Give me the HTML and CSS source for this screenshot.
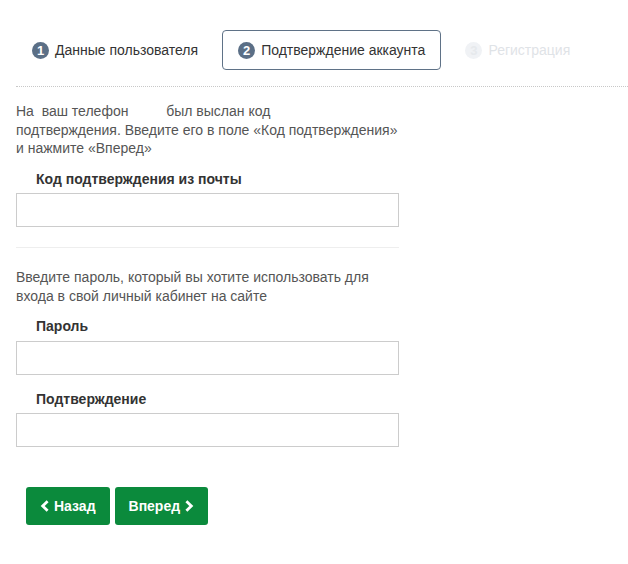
FILE: index.html
```html
<!DOCTYPE html>
<html lang="ru">
<head>
<meta charset="utf-8">
<link rel="stylesheet" href="styles.css">
</head>
<body>
<div class="page">
  <nav class="steps">
    <div class="step done"><span class="num">1</span><span>Данные пользователя</span></div>
    <div class="step active"><span class="num">2</span><span>Подтверждение аккаунта</span></div>
    <div class="step disabled"><span class="num">3</span><span>Регистрация</span></div>
  </nav>
  <div class="content">
    <p class="info">На&nbsp; ваш телефон <span class="phone"></span> был выслан код<br>подтверждения. Введите его в поле «Код подтверждения» и нажмите «Вперед»</p>
    <div class="group">
      <label class="label">Код подтверждения из почты</label>
      <input class="field" type="text">
    </div>
    <hr class="sep">
    <p class="info">Введите пароль, который вы хотите использовать для входа в свой личный кабинет на сайте</p>
    <div class="group">
      <label class="label">Пароль</label>
      <input class="field" type="password">
    </div>
    <div class="group">
      <label class="label">Подтверждение</label>
      <input class="field" type="password">
    </div>
  </div>
  <div class="actions">
    <button class="btn"><svg class="chev" viewBox="0 0 10 12"><path d="M7.6 1.3 L2.7 6 L7.6 10.7" /></svg>Назад</button>
    <button class="btn">Вперед<svg class="chev" viewBox="0 0 10 12"><path d="M2.4 1.3 L7.3 6 L2.4 10.7" /></svg></button>
  </div>
</div>
</body>
</html>
```
FILE: styles.css
```css
* { box-sizing: border-box; }
html, body { margin: 0; padding: 0; background: #fff; }
body {
  font-family: "Liberation Sans", Arial, sans-serif;
  font-size: 14px;
  line-height: 18.5px;
  color: #555;
}
.page { padding: 30px 0 0 16px; }
.steps {
  display: flex;
  gap: 8px;
  padding-bottom: 16px;
  border-bottom: 1px dotted #c8c8c8;
}
.step {
  display: flex;
  align-items: center;
  gap: 6px;
  height: 40px;
  padding: 0 15px;
  border: 1px solid transparent;
  border-radius: 4px;
  color: #333;
}
.step.active { border-color: #5f7287; }
.step.disabled { color: #dfe3e7; }
.num {
  width: 17px;
  height: 17px;
  border-radius: 50%;
  background: #5b6f86;
  color: #fff;
  font-weight: bold;
  font-size: 13px;
  line-height: 17px;
  text-align: center;
}
.step.disabled .num { background: #f0f2f5; color: #e6e9ec; }
.content { width: 383px; padding-top: 15px; }
.info { margin: 0 0 12px; }
.phone { display: inline-block; width: 30px; height: 1px; }
.group { margin-bottom: 15px; }
.label {
  display: block;
  padding-left: 20px;
  margin-bottom: 5px;
  font-weight: bold;
  color: #333;
}
.field {
  display: block;
  width: 100%;
  height: 34px;
  border: 1px solid #ccc;
  border-radius: 0;
  background: #fff;
  margin: 0;
}
.sep {
  margin: 20px 0 20px;
  border: 0;
  border-top: 1px solid #eee;
}
.content .group:last-child { margin-bottom: 0; }
.actions {
  display: flex;
  gap: 5px;
  padding: 40px 0 0 10px;
}
.btn {
  display: flex;
  align-items: center;
  gap: 4px;
  height: 38px;
  padding: 0 14px;
  border: 0;
  border-radius: 3px;
  background: #0b8a3c;
  color: #fff;
  font-family: "Liberation Sans", Arial, sans-serif;
  font-size: 14px;
  font-weight: bold;
}
.chev { width: 10px; height: 12px; }
.chev path { fill: none; stroke: #fff; stroke-width: 2.8; stroke-linecap: butt; stroke-linejoin: miter; }
```
